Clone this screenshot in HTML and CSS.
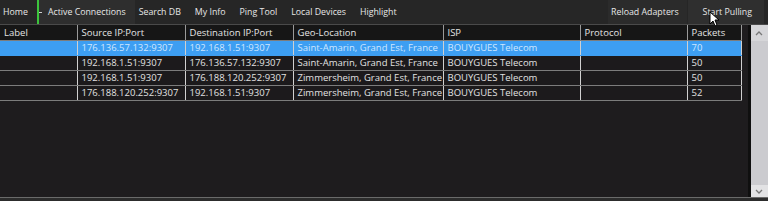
FILE: index.html
```html
<!DOCTYPE html>
<html>
<head>
<meta charset="utf-8">
<link rel="stylesheet" href="styles.css">
</head>
<body>
<div class="app">
  <div class="topbar">
    <div class="tabs">
      <span class="tab tab-home">Home</span>
      <span class="divider"><span class="tick"></span></span>
      <span class="tab tab-active">Active Connections</span>
      <span class="tab tab-first">Search DB</span>
      <span class="tab">My Info</span>
      <span class="tab">Ping Tool</span>
      <span class="tab">Local Devices</span>
      <span class="tab">Highlight</span>
    </div>
    <div class="actions">
      <span class="btn btn-reload">Reload Adapters</span>
      <span class="btn btn-start">Start Pulling
        <svg class="cursor" width="10" height="16" viewBox="0 0 10 16"><path d="M1 1 L1 13 L4 10 L6 15 L8 14 L6 9 L10 9 Z" fill="#ffffff" stroke="#000000" stroke-width="1"/></svg>
      </span>
    </div>
  </div>
  <div class="content">
    <div class="grid-area">
      <table class="grid">
        <colgroup>
          <col class="c1"><col class="c2"><col class="c3"><col class="c4"><col class="c5"><col class="c6"><col class="c7">
        </colgroup>
        <thead>
          <tr><th>Label</th><th>Source IP:Port</th><th>Destination IP:Port</th><th>Geo-Location</th><th>ISP</th><th>Protocol</th><th>Packets</th></tr>
        </thead>
        <tbody>
          <tr class="selected"><td></td><td>176.136.57.132:9307</td><td>192.168.1.51:9307</td><td>Saint-Amarin, Grand Est, France</td><td>BOUYGUES Telecom</td><td></td><td>70</td></tr>
          <tr><td></td><td>192.168.1.51:9307</td><td>176.136.57.132:9307</td><td>Saint-Amarin, Grand Est, France</td><td>BOUYGUES Telecom</td><td></td><td>50</td></tr>
          <tr><td></td><td>192.168.1.51:9307</td><td>176.188.120.252:9307</td><td>Zimmersheim, Grand Est, France</td><td>BOUYGUES Telecom</td><td></td><td>50</td></tr>
          <tr><td></td><td>176.188.120.252:9307</td><td>192.168.1.51:9307</td><td>Zimmersheim, Grand Est, France</td><td>BOUYGUES Telecom</td><td></td><td>52</td></tr>
        </tbody>
      </table>
    </div>
    <div class="scrollbar">
      <div class="sb-btn"><svg width="8" height="5" viewBox="0 0 8 5"><path d="M1 4 L4 1 L7 4" fill="none" stroke="#777" stroke-width="1.3"/></svg></div>
      <div class="sb-track"></div>
      <div class="sb-btn sb-down"><svg width="8" height="5" viewBox="0 0 8 5"><path d="M1 1 L4 4 L7 1" fill="none" stroke="#777" stroke-width="1.3"/></svg></div>
    </div>
  </div>
  <div class="footer"></div>
</div>
</body>
</html>
```

FILE: styles.css
```css
html, body {
  margin: 0;
  padding: 0;
  background: #1e1c1e;
  width: 768px;
  height: 201px;
  overflow: hidden;
}
.app {
  display: flex;
  flex-direction: column;
  height: 201px;
  font-family: "Open Sans", "Noto Sans", sans-serif;
  font-size: 9.5px;
  color: #e2e2e2;
}
.topbar {
  height: 24px;
  background: #262626;
  display: flex;
  justify-content: space-between;
  align-items: stretch;
  border-bottom: 1px solid #4a4a4a;
  font-size: 8.8px;
}
.tabs {
  display: flex;
  align-items: stretch;
}
.tab {
  display: flex;
  align-items: center;
  padding: 0 7px;
  color: #e6e6e6;
}
.tab-home {
  padding: 0 9px 0 3px;
}
.tab-first {
  padding-left: 4px;
}
.divider {
  width: 2px;
  background: #3cc43c;
  position: relative;
}
.tick {
  position: absolute;
  left: 2px;
  top: 12px;
  width: 3px;
  height: 1px;
  background: #cfcfcf;
}
.tab-active {
  background: #2e2e2e;
  padding: 0 9px 0 9px;
}
.actions {
  display: flex;
  align-items: stretch;
  padding-right: 4px;
  gap: 1px;
}
.btn {
  display: flex;
  align-items: center;
  background: #2b2b2b;
  padding: 0 8px 0 3px;
  color: #e6e6e6;
  position: relative;
}
.btn-start {
  padding: 0 12px 0 15px;
  background: #2f2f2f;
}
.cursor {
  position: absolute;
  left: 21px;
  top: 11px;
}
.content {
  flex: 1;
  display: flex;
  min-height: 0;
}
.grid-area {
  flex: 1;
}
.grid {
  border-collapse: collapse;
  table-layout: fixed;
  width: 741px;
}
.c1 { width: 77px; }
.c2 { width: 108px; }
.c3 { width: 108px; }
.c4 { width: 150px; }
.c5 { width: 137px; }
.c6 { width: 107px; }
.c7 { width: 54px; }
.grid th, .grid td {
  text-align: left;
  font-weight: normal;
  padding: 0 0 0 4px;
  height: 14px;
  line-height: 14px;
  white-space: nowrap;
  overflow: hidden;
  border-right: 1px solid #d0d0d0;
  border-bottom: 1px solid #7c7c7c;
}
.grid th {
  background: #161616;
  height: 15px;
  color: #e4e4e4;
  border-right-color: #9a9a9a;
}
.grid td {
  background: #1c1a1c;
}
.grid tr.selected td {
  background: #3d9ef2;
  color: #cfe7ff;
  border-bottom-color: #3d9ef2;
}
.scrollbar {
  width: 18px;
  margin-left: 6px;
  border-left: 3px solid #0f0f0f;
  background: #cbcbcf;
  display: flex;
  flex-direction: column;
}
.sb-btn {
  height: 16px;
  background: #d6d6d9;
  display: flex;
  align-items: center;
  justify-content: center;
}
.sb-track {
  flex: 1;
}
.sb-down {
  height: 12px;
  background: #e2e2e4;
}
.footer {
  height: 3px;
  border-top: 1px solid #6a6a6a;
  background: #2c2c2c;
}
```
